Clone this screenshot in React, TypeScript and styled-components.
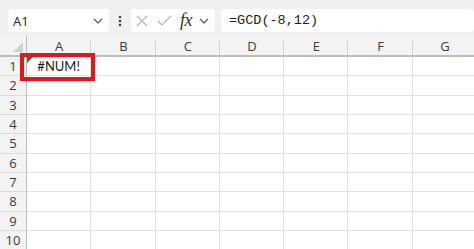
import React from "react";
import styled, { createGlobalStyle } from "styled-components";

const Global = createGlobalStyle`
  html, body { margin: 0; padding: 0; background: #f0f0f0; }
  body { font-family: "Open Sans", "Noto Sans", sans-serif; }
`;

const Page = styled.div`
  width: 474px;
  height: 249px;
  overflow: hidden;
  display: flex;
  flex-direction: column;
  background: #f0f0f0;
`;

const RibbonEdge = styled.div`
  height: 4px;
  margin-left: 9px;
  background: #ffffff;
  border-bottom-left-radius: 6px;
  box-shadow: 0 1px 1px rgba(0, 0, 0, 0.08);
`;

const FormulaRow = styled.div`
  display: flex;
  align-items: center;
  height: 23px;
  margin-top: 9px;
  padding-left: 8px;
`;

const Field = styled.div<{ $w?: number }>`
  height: 23px;
  box-sizing: border-box;
  background: #ffffff;
  border-radius: 4px;
  display: flex;
  align-items: center;
  ${(p) => (p.$w ? `width: ${p.$w}px; flex: none;` : `flex: 1;`)}
`;

const NameText = styled.span`
  flex: 1;
  padding-left: 5px;
  font-size: 13px;
  color: #222;
`;

const Dots = styled.div`
  width: 22px;
  flex: none;
  display: flex;
  justify-content: center;
`;

const IconButton = styled.div<{ $w: number }>`
  width: ${(p) => p.$w}px;
  height: 23px;
  display: flex;
  align-items: center;
  justify-content: center;
  flex: none;
`;

const Fx = styled.span`
  font-family: "Liberation Serif", "DejaVu Serif", serif;
  font-style: italic;
  font-size: 18px;
  color: #333;
  letter-spacing: -0.5px;
`;

const FormulaText = styled.span`
  padding-left: 8px;
  font-family: "Liberation Mono", "DejaVu Sans Mono", monospace;
  font-size: 13.5px;
  color: #222;
`;

const Gap = styled.div<{ $w: number }>`
  width: ${(p) => p.$w}px;
  flex: none;
`;

const Sheet = styled.div`
  position: relative;
  margin-top: 4px;
  display: grid;
  grid-template-columns: 27px repeat(7, 64.3px);
  grid-template-rows: 21px repeat(10, 19.33px);
  background: #ffffff;
`;

const Corner = styled.div`
  background: #f3f3f3;
  border-right: 1px solid #bdbdbd;
  border-bottom: 2px solid #bdbdbd;
  box-sizing: border-box;
  position: relative;
`;

const CornerTriangle = styled.div`
  position: absolute;
  right: 3px;
  bottom: 3px;
  width: 0;
  height: 0;
  border-left: 10px solid transparent;
  border-bottom: 10px solid #d0d0d0;
`;

const ColHeader = styled.div`
  background: #f3f3f3;
  border-bottom: 2px solid #bdbdbd;
  box-sizing: border-box;
  display: flex;
  align-items: center;
  justify-content: center;
  font-size: 13px;
  color: #3a3a3a;
  position: relative;
  &::after {
    content: "";
    position: absolute;
    right: 0;
    top: 4px;
    bottom: 0;
    width: 1px;
    background: #d6d6d6;
  }
`;

const RowHeader = styled.div`
  background: #f3f3f3;
  border-right: 1px solid #bdbdbd;
  border-bottom: 1px solid #dcdcdc;
  box-sizing: border-box;
  display: flex;
  align-items: center;
  justify-content: center;
  font-size: 13px;
  color: #3a3a3a;
`;

const Cell = styled.div`
  border-right: 1px solid #e1e1e1;
  border-bottom: 1px solid #e1e1e1;
  box-sizing: border-box;
  display: flex;
  align-items: center;
  justify-content: center;
  font-family: "Lato", "Liberation Sans", sans-serif;
  font-size: 13px;
  color: #1a1a1a;
  position: relative;
`;

const ErrorFlag = styled.div`
  position: absolute;
  left: 0;
  top: 0;
  width: 0;
  height: 0;
  border-top: 6px solid #1f7a3c;
  border-right: 6px solid transparent;
`;

const Highlight = styled.div`
  position: absolute;
  left: 20px;
  top: 17px;
  width: 75px;
  height: 28px;
  box-sizing: border-box;
  border: 4px solid #e3161e;
  pointer-events: none;
`;

const Chevron = () => (
  <svg width="10" height="6" viewBox="0 0 10 6">
    <polyline points="1,1 5,5 9,1" fill="none" stroke="#555" strokeWidth="1.2" />
  </svg>
);

const VDots = () => (
  <svg width="4" height="12" viewBox="0 0 4 12">
    <circle cx="2" cy="2" r="1.3" fill="#444" />
    <circle cx="2" cy="6" r="1.3" fill="#444" />
    <circle cx="2" cy="10" r="1.3" fill="#444" />
  </svg>
);

const XIcon = () => (
  <svg width="12" height="12" viewBox="0 0 12 12">
    <path d="M1 1 L11 11 M11 1 L1 11" stroke="#b5b5b5" strokeWidth="1.2" fill="none" />
  </svg>
);

const CheckIcon = () => (
  <svg width="15" height="11" viewBox="0 0 15 11">
    <polyline points="1,6 5,10 14,1" fill="none" stroke="#b5b5b5" strokeWidth="1.2" />
  </svg>
);

const cols = ["A", "B", "C", "D", "E", "F", "G"];
const rows = [1, 2, 3, 4, 5, 6, 7, 8, 9, 10];

export default function App() {
  return (
    <Page>
      <Global />
      <RibbonEdge />
      <FormulaRow>
        <Field $w={101}>
          <NameText>A1</NameText>
          <IconButton $w={22}>
            <Chevron />
          </IconButton>
        </Field>
        <Dots>
          <VDots />
        </Dots>
        <Field $w={84}>
          <IconButton $w={22}>
            <XIcon />
          </IconButton>
          <IconButton $w={22}>
            <CheckIcon />
          </IconButton>
          <IconButton $w={22}>
            <Fx>fx</Fx>
          </IconButton>
          <IconButton $w={14}>
            <Chevron />
          </IconButton>
        </Field>
        <Gap $w={6} />
        <Field>
          <FormulaText>=GCD(-8,12)</FormulaText>
        </Field>
      </FormulaRow>
      <Sheet>
        <Corner>
          <CornerTriangle />
        </Corner>
        {cols.map((c) => (
          <ColHeader key={c}>{c}</ColHeader>
        ))}
        {rows.map((r) => (
          <React.Fragment key={r}>
            <RowHeader>{r}</RowHeader>
            {cols.map((c) => (
              <Cell key={c}>
                {r === 1 && c === "A" ? (
                  <>
                    <ErrorFlag />
                    #NUM!
                  </>
                ) : null}
              </Cell>
            ))}
          </React.Fragment>
        ))}
        <Highlight />
      </Sheet>
    </Page>
  );
}
